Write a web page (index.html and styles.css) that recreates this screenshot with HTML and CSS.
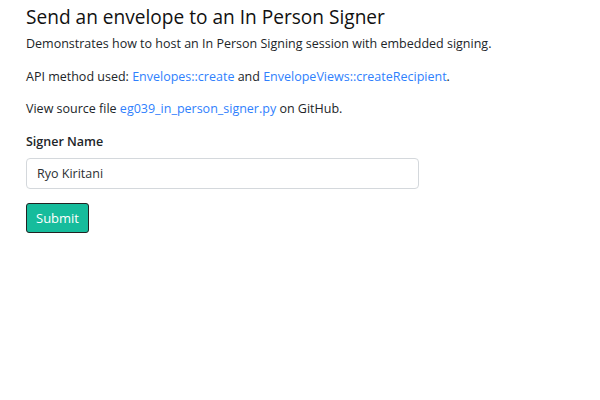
FILE: index.html
```html
<!DOCTYPE html>
<html lang="en">
<head>
<meta charset="utf-8">
<title>In Person Signer</title>
<link rel="stylesheet" href="styles.css">
</head>
<body>
<main class="container">
  <h4 class="title">Send an envelope to an In Person Signer</h4>
  <p>Demonstrates how to host an In Person Signing session with embedded signing.</p>
  <p>API method used: <a href="#">Envelopes::create</a> and <a href="#">EnvelopeViews::createRecipient</a>.</p>
  <p>View source file <a href="#">eg039_in_person_signer.py</a> on GitHub.</p>
  <form class="form">
    <div class="field">
      <label class="label" for="signer">Signer Name</label>
      <input class="input" id="signer" type="text" value="Ryo Kiritani">
    </div>
    <button class="btn" type="submit">Submit</button>
  </form>
</main>
</body>
</html>
```

FILE: styles.css
```css
html, body {
  margin: 0;
  padding: 0;
  background: #fff;
}
body {
  font-family: "Open Sans", "Noto Sans", sans-serif;
  font-size: 12.5px;
  line-height: 20px;
  color: #212529;
}
.container {
  padding: 5px 26px 0;
}
.title {
  font-size: 19.1px;
  font-weight: 400;
  line-height: 24px;
  margin: 0 0 5px;
  color: #111;
}
p {
  margin: 0 0 12.5px;
}
a {
  color: #2f7ffd;
  text-decoration: none;
}
.form {
  margin-top: 0;
}
.field {
  display: flex;
  flex-direction: column;
  gap: 6px;
  margin-bottom: 14px;
}
.label {
  font-weight: 600;
  line-height: 20px;
}
.input {
  box-sizing: border-box;
  width: 393px;
  height: 31px;
  padding: 0 10px;
  border: 1px solid #d4d8dc;
  border-radius: 4px;
  font-family: inherit;
  font-size: 12.5px;
  color: #2b2f33;
  background: #fff;
}
.btn {
  box-sizing: border-box;
  height: 30px;
  padding: 0 9px;
  border: 1px solid #222;
  border-radius: 3px;
  background: #16bc9c;
  color: #fff;
  font-family: inherit;
  font-size: 13px;
}
```
